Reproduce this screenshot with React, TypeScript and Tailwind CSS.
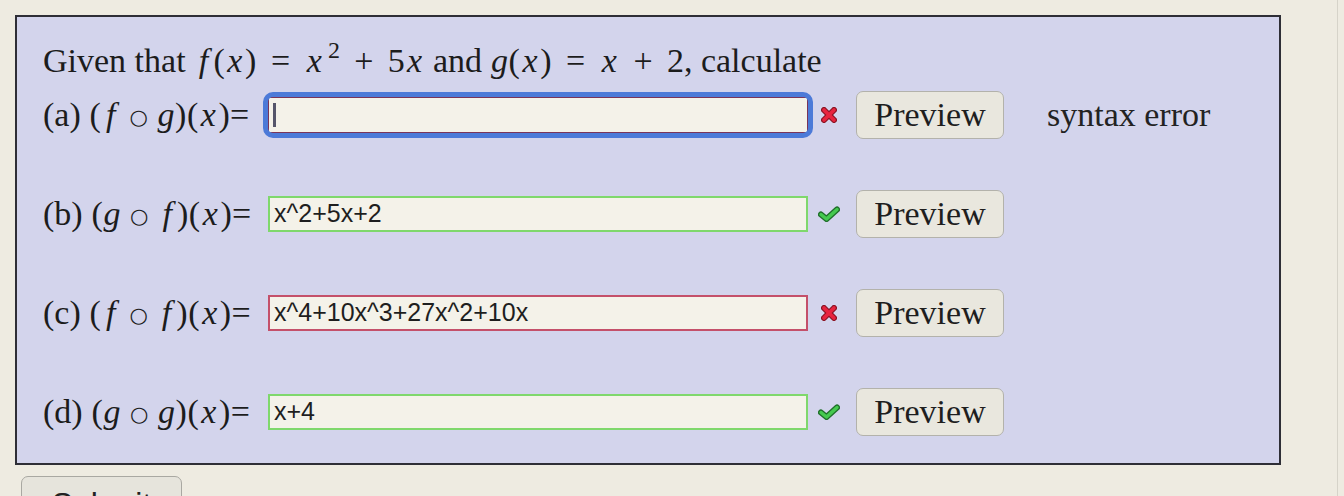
import React from 'react';

const serif = "font-['Liberation_Serif','Times_New_Roman',serif]";

// math glyphs get KaTeX-ish boxes so spacing follows the reference
const X = () => <span className="inline-block w-[0.58em] text-center italic">x</span>;
const F = () => <span className="inline-block w-[0.56em] text-center italic">f</span>;
const G = () => <span className="inline-block w-[0.52em] text-center italic">g</span>;
const Lp = () => <span className="inline-block w-[0.35em] text-center">(</span>;
const Rp = () => <span className="inline-block w-[0.35em] text-center">)</span>;
const Circ = () => (
  <span className="relative -top-[0.08em] inline-block w-[1.75em] text-center font-['DejaVu_Sans',sans-serif] text-[0.62em] leading-none">
    ○
  </span>
);

function Op({ children }: { children: React.ReactNode }) {
  return <span className="mx-[0.42em]">{children}</span>;
}

function Wrong() {
  return (
    <svg width="16" height="16" viewBox="0 0 16 16">
      <g strokeLinecap="round">
        <line x1="3" y1="3" x2="13" y2="13" stroke="#8c1626" strokeWidth="6" />
        <line x1="13" y1="3" x2="3" y2="13" stroke="#8c1626" strokeWidth="6" />
        <line x1="3" y1="3" x2="13" y2="13" stroke="#e8243f" strokeWidth="3.6" />
        <line x1="13" y1="3" x2="3" y2="13" stroke="#e8243f" strokeWidth="3.6" />
      </g>
    </svg>
  );
}

function Right() {
  return (
    <svg width="22" height="16" viewBox="0 0 22 16">
      <g fill="none" strokeLinecap="round" strokeLinejoin="round">
        <path d="M3 8.5 L8.5 13 L19 3.5" stroke="#1f6f2a" strokeWidth="6" />
        <path d="M3 8.5 L8.5 13 L19 3.5" stroke="#45c94f" strokeWidth="3.4" />
      </g>
    </svg>
  );
}

type Row = {
  tag: string;
  outer: 'f' | 'g';
  inner: 'f' | 'g';
  value: string;
  ok: boolean;
  focused?: boolean;
  note?: string;
};

const rows: Row[] = [
  { tag: 'a', outer: 'f', inner: 'g', value: '', ok: false, focused: true, note: 'syntax error' },
  { tag: 'b', outer: 'g', inner: 'f', value: 'x^2+5x+2', ok: true },
  { tag: 'c', outer: 'f', inner: 'f', value: 'x^4+10x^3+27x^2+10x', ok: false },
  { tag: 'd', outer: 'g', inner: 'g', value: 'x+4', ok: true },
];

const Fn = ({ n }: { n: 'f' | 'g' }) => (n === 'f' ? <F /> : <G />);

function AnswerRow({ row }: { row: Row }) {
  const border = row.ok ? 'border-[#7fd86c]' : row.focused ? 'border-[#7a3558]' : 'border-[#c4506a]';
  return (
    <div className="flex h-12 items-center">
      <div className={`${serif} w-[225px] text-[34px] leading-none text-[#1c1c1c] whitespace-nowrap`}>
        ({row.tag}) <Lp />
        <Fn n={row.outer} />
        <Circ />
        <Fn n={row.inner} />
        <Rp />
        <Lp />
        <X />
        <Rp />=
      </div>
      <div className={`w-[540px] ${row.focused ? 'rounded-[5px] outline-[5px] outline-[#4c7ad8] outline' : ''}`}>
        <div
          className={`flex h-9 items-center bg-[#f4f2e9] px-[4px] ${row.focused ? 'border' : 'border-2'} ${border} font-['Liberation_Sans',Arial,sans-serif] text-[25px] text-[#1e1e1e]`}
        >
          {row.focused ? <div className="h-[24px] w-[3px] bg-[#55556a]" /> : row.value}
        </div>
      </div>
      <div className="ml-[10px] flex w-[22px] items-center justify-center">{row.ok ? <Right /> : <Wrong />}</div>
      <button
        className={`${serif} ml-[16px] h-12 w-[148px] rounded-[7px] border border-[#b3b2ab] bg-[#e9e7de] text-[34px] leading-none text-[#1e1e1e]`}
      >
        Preview
      </button>
      {row.note && (
        <span className={`${serif} ml-[43px] text-[34px] leading-none text-[#222]`}>{row.note}</span>
      )}
    </div>
  );
}

export default function App() {
  return (
    <div className="h-[496px] w-[1344px] overflow-hidden bg-[#eeebe1]">
      <div className="h-full w-[1338px] border-r border-[#d6d3c9] pl-[15px] pt-[15px]">
        <div className="w-[1266px] border-2 border-[#2e2e36] bg-[#d3d4ec] pb-[27px] pl-[26px] pt-[23px]">
          <div className={`${serif} flex h-10 items-center text-[34px] text-[#1c1c1c] whitespace-nowrap`}>
            <span>
              Given that <F />
              <Lp />
              <X />
              <Rp />
              <Op>=</Op>
              <X />
              <span className="relative -top-[14px] ml-[4px] text-[24px] leading-none">2</span>
              <Op>+</Op>5<X /> and <G />
              <Lp />
              <X />
              <Rp />
              <Op>=</Op>
              <X />
              <Op>+</Op>2, calculate
            </span>
          </div>
          <div className="mt-[11px] flex flex-col gap-[51px]">
            {rows.map((r) => (
              <AnswerRow key={r.tag} row={r} />
            ))}
          </div>
        </div>
        <div className="ml-[6px] mt-[11px] flex h-[44px] w-[161px] items-start justify-center rounded-[7px] border border-[#a9a8a2] bg-[#e6e4dc] pt-[11px] font-['Liberation_Sans',Arial,sans-serif] text-[32px] leading-none text-[#222]">
          Submit
        </div>
      </div>
    </div>
  );
}
